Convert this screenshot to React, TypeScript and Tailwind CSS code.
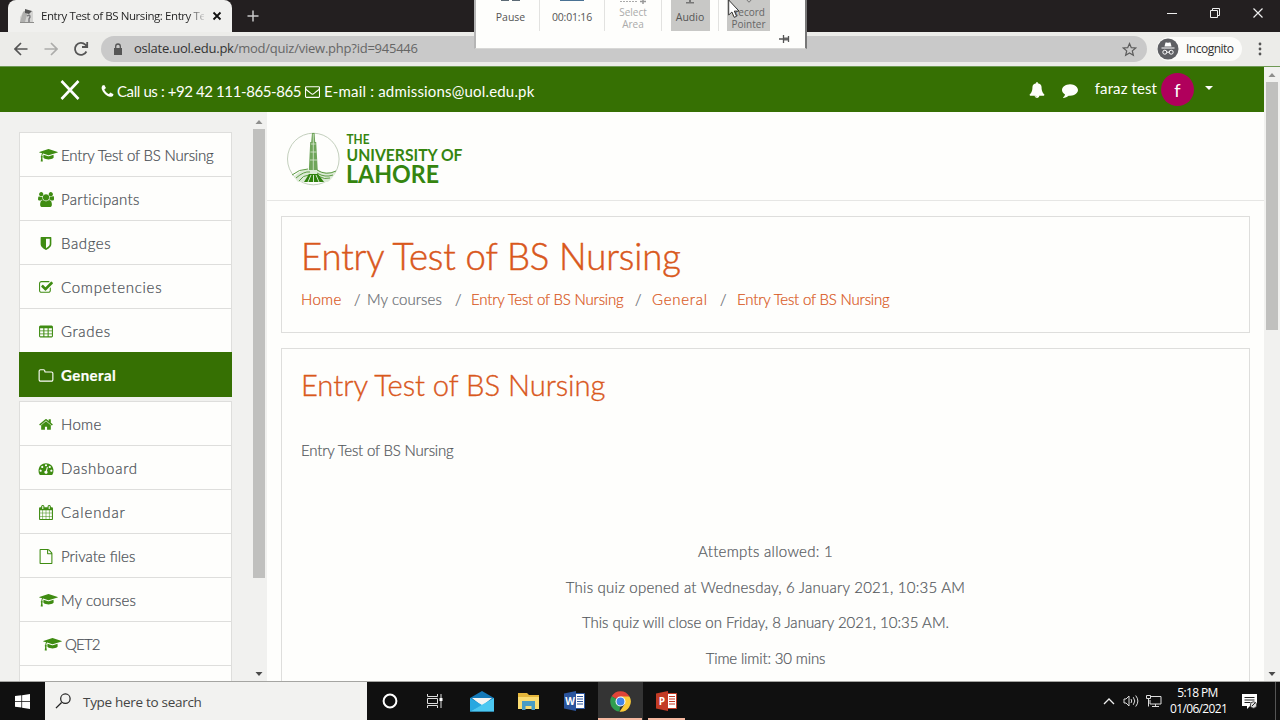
import React from 'react';

interface NavItem {
  label: string;
  icon: keyof typeof GLYPHS;
  tracking: string;
  nested?: boolean;
}

const GLYPHS = {
  cap: 'M1774 836l18 316q4 69-82 128t-235 93.5-323 34.5-323-34.5-235-93.5-82-128l18-316 574 181q22 7 48 7t48-7zm530-324q0 23-22 31l-1120 352q-4 1-10 1t-10-1l-652-206q-43 34-71 111.5t-34 178.5q63 36 63 109 0 69-58 107l58 433q2 14-8 25-9 11-24 11h-192q-15 0-24-11-10-11-8-25l58-433q-58-38-58-107 0-73 65-111 11-207 98-330l-333-104q-22-8-22-31t22-31l1120-352q4-1 10-1t10 1l1120 352q22 8 22 31z',
  users: 'M593 896q-162 5-265 128h-134q-82 0-138-40.5t-56-118.5q0-353 124-353 6 0 43.5 21t97.5 42.5 119 21.5q67 0 133-23-5 37-5 66 0 159 93 293zm1071 637q0 120-73 189.5t-194 69.5h-874q-121 0-194-69.5t-73-189.5q0-53 3.5-103.5t14-109 26.5-108.5 43-97.5 62-81 85.5-53.5 111.5-20q10 0 43 21.5t73 48 107 48 135 21.5 135-21.5 107-48 73-48 43-21.5q61 0 111.5 20t85.5 53.5 62 81 43 97.5 26.5 108.5 14 109 3.5 103.5zm-1024-1277q0 106-75 181t-181 75-181-75-75-181 75-181 181-75 181 75 75 181zm704 384q0 159-112.5 271.5t-271.5 112.5-271.5-112.5-112.5-271.5 112.5-271.5 271.5-112.5 271.5 112.5 112.5 271.5zm576 225q0 78-56 118.5t-138 40.5h-134q-103-123-265-128 93-134 93-293 0-29-5-66 66 23 133 23 59 0 119-21.5t97.5-42.5 43.5-21q124 0 124 353zm-128-609q0 106-75 181t-181 75-181-75-75-181 75-181 181-75 181 75 75 181z',
  shield: 'M1344 960v-640h-448v1137q119-63 213-137 235-184 235-360zm192-768v768q0 86-33.5 170.5t-83 150-118 127.5-126.5 103-121 77.5-89.5 49.5-42.5 20q-12 6-26 6t-26-6q-16-7-42.5-20t-89.5-49.5-121-77.5-126.5-103-118-127.5-83-150-33.5-170.5v-768q0-26 19-45t45-19h1152q26 0 45 19t19 45z',
  check: 'M1472 930v318q0 119-84.5 203.5t-203.5 84.5h-832q-119 0-203.5-84.5t-84.5-203.5v-832q0-119 84.5-203.5t203.5-84.5h832q63 0 117 25 15 7 18 23 3 17-9 29l-49 49q-10 10-23 10-3 0-9-2-23-6-45-6h-832q-66 0-113 47t-47 113v832q0 66 47 113t113 47h832q66 0 113-47t47-113v-254q0-13 9-22l64-64q10-10 23-10 6 0 12 3 20 8 20 29zm231-489l-814 814q-24 24-57 24t-57-24l-430-430q-24-24-24-57t24-57l110-110q24-24 57-24t57 24l263 263 647-647q24-24 57-24t57 24l110 110q24 24 24 57t-24 57z',
  table: 'M1728 352v1088q0 66-47 113t-113 47h-1344q-66 0-113-47t-47-113v-1088q0-66 47-113t113-47h1344q66 0 113 47t47 113zM192 512h384v256h-384zM704 512h384v256h-384zM1216 512h384v256h-384zM192 864h384v256h-384zM704 864h384v256h-384zM1216 864h384v256h-384zM192 1216h384v256h-384zM704 1216h384v256h-384zM1216 1216h384v256h-384z',
  folder: 'M1600 1312v-704q0-40-28-68t-68-28h-704q-40 0-68-28t-28-68v-64q0-40-28-68t-68-28h-320q-40 0-68 28t-28 68v960q0 40 28 68t68 28h1216q40 0 68-28t28-68zm128-704v704q0 92-66 158t-158 66h-1216q-92 0-158-66t-66-158v-960q0-92 66-158t158-66h320q92 0 158 66t66 158v32h672q92 0 158 66t66 158z',
  home: 'M1472 992v480q0 26-19 45t-45 19h-384v-384h-256v384h-384q-26 0-45-19t-19-45v-480q0-1 .5-3t.5-3l575-474 575 474q1 2 1 6zm223-69l-62 74q-8 9-21 11h-3q-13 0-21-7l-692-577-692 577q-12 8-24 7-13-2-21-11l-62-74q-8-10-7-23.5t11-21.5l719-599q32-26 76-26t76 26l244 204v-195q0-14 9-23t23-9h192q14 0 23 9t9 23v408l219 182q10 8 11 21.5t-7 23.5z',
  gauge: 'M384 1152q0-53-37.5-90.5t-90.5-37.5-90.5 37.5-37.5 90.5 37.5 90.5 90.5 37.5 90.5-37.5 37.5-90.5zm192-448q0-53-37.5-90.5t-90.5-37.5-90.5 37.5-37.5 90.5 37.5 90.5 90.5 37.5 90.5-37.5 37.5-90.5zm428 481l101-382q6-26-7.5-48.5t-38.5-29.5-48 6.5-30 39.5l-101 382q-60 5-107 43.5t-63 98.5q-20 77 20 146t117 89 146-20 89-117q16-60-6-117t-72-91zm660-33q0-53-37.5-90.5t-90.5-37.5-90.5 37.5-37.5 90.5 37.5 90.5 90.5 37.5 90.5-37.5 37.5-90.5zm-640-640q0-53-37.5-90.5t-90.5-37.5-90.5 37.5-37.5 90.5 37.5 90.5 90.5 37.5 90.5-37.5 37.5-90.5zm448 192q0-53-37.5-90.5t-90.5-37.5-90.5 37.5-37.5 90.5 37.5 90.5 90.5 37.5 90.5-37.5 37.5-90.5zm320 448q0 261-141 483-19 29-54 29h-1402q-35 0-54-29-141-221-141-483 0-182 71-348t191-286 286-191 348-71 348 71 286 191 191 286 71 348z',
  calendar: 'M192 1664h288v-288h-288v288zm352 0h320v-288h-320v288zm-352-352h288v-320h-288v320zm352 0h320v-320h-320v320zm-352-384h288v-288h-288v288zm736 736h320v-288h-320v288zm-384-736h320v-288h-320v288zm768 736h288v-288h-288v288zm-384-352h320v-320h-320v320zm-352-864v-288q0-13-9.5-22.5t-22.5-9.5h-64q-13 0-22.5 9.5t-9.5 22.5v288q0 13 9.5 22.5t22.5 9.5h64q13 0 22.5-9.5t9.5-22.5zm736 864h288v-320h-288v320zm-384-384h320v-288h-320v288zm384 0h288v-288h-288v288zm32-480v-288q0-13-9.5-22.5t-22.5-9.5h-64q-13 0-22.5 9.5t-9.5 22.5v288q0 13 9.5 22.5t22.5 9.5h64q13 0 22.5-9.5t9.5-22.5zm384-64v1280q0 52-38 90t-90 38h-1408q-52 0-90-38t-38-90v-1280q0-52 38-90t90-38h128v-96q0-66 47-113t113-47h64q66 0 113 47t47 113v96h384v-96q0-66 47-113t113-47h64q66 0 113 47t47 113v96h128q52 0 90 38t38 90z',
  file: 'M1596 380q28 28 48 76t20 88v1152q0 40-28 68t-68 28h-1344q-40 0-68-28t-28-68v-1600q0-40 28-68t68-28h896q40 0 88 20t76 48zm-444-244v376h376q-10-29-22-41l-313-313q-12-12-41-22zm384 1528v-1024h-416q-40 0-68-28t-28-68v-416h-768v1536h1280z',
  phone: 'M1600 1240q0 27-10 70.5t-21 68.5q-21 50-122 106-94 51-186 51-27 0-53-3.5t-57.5-12.5-47-14.5-55.5-20.5-49-18q-98-35-175-83-127-79-264-216t-216-264q-48-77-83-175-3-9-18-49t-20.5-55.5-14.5-47-12.5-57.5-3.5-53q0-92 51-186 56-101 106-122 25-11 68.5-21t70.5-10q14 0 21 3 18 6 53 76 11 19 30 54t35 63.5 31 53.5q3 4 17.5 25t21.5 35.5 7 28.5q0 20-28.5 50t-62 55-62 53-28.5 46q0 9 5 22.5t8.5 20.5 14 24 11.5 19q76 137 174 235t235 174q2 1 19 11.5t24 14 20.5 8.5 22.5 5q18 0 46-28.5t53-62 55-62 50-28.5q14 0 28.5 7t35.5 21.5 25 17.5q25 15 53.5 31t63.5 35 54 30q70 35 76 53 3 7 3 21z',
  envelope: 'M1664 1504v-768q-32 36-69 66-268 206-426 338-51 43-83 67t-86.5 48.5-102.5 24.5h-2q-48 0-102.5-24.5t-86.5-48.5-83-67q-158-132-426-338-37-30-69-66v768q0 13 9.5 22.5t22.5 9.5h1472q13 0 22.5-9.5t9.5-22.5zm0-1051v-24.5l-.5-13-3-12.5-5.5-9-9-7.5-14-2.5h-1472q-13 0-22.5 9.5t-9.5 22.5q0 168 147 284 193 152 401 317 6 5 35 29.5t46 37.5 44.5 31.5 50.5 27.5 43 9h2q20 0 43-9t50.5-27.5 44.5-31.5 46-37.5 35-29.5q208-165 401-317 54-43 100.5-115.5t46.5-131.5zm128-37v1088q0 66-47 113t-113 47h-1472q-66 0-113-47t-47-113v-1088q0-66 47-113t113-47h1472q66 0 113 47t47 113z',
  bell: 'M912 1696q0-16-16-16-59 0-101.5-42.5t-42.5-101.5q0-16-16-16t-16 16q0 73 51.5 124.5t124.5 51.5q16 0 16-16zm816-288q0 52-38 90t-90 38h-448q0 106-75 181t-181 75-181-75-75-181h-448q-52 0-90-38t-38-90q50-42 91-88t85-119.5 74.5-158.5 50-206 19.5-260q0-152 117-282.5t307-158.5q-8-19-8-39 0-40 28-68t68-28 68 28 28 68q0 20-8 39 190 28 307 158.5t117 282.5q0 139 19.5 260t50 206 74.5 158.5 85 119.5 91 88z',
  comment: 'M1792 896q0 174-120 321.5t-326 233-450 85.5q-70 0-145-8-198 175-460 242-49 14-114 22-17 2-30.5-9t-17.5-29v-1q-3-4-.5-12t2-10 4.5-9.5l6-9 7-8.5 8-9q7-8 31-34.5t34.5-38 31-39.5 32.5-51 27-59 26-76q-157-89-247.5-220t-90.5-281q0-130 71-248.5t191-204.5 286-136.5 348-50.5q244 0 450 85.5t326 233 120 321.5z',
};

const courseItems: NavItem[] = [
  { label: 'Entry Test of BS Nursing', icon: 'cap', tracking: 'tracking-[-0.19px]' },
  { label: 'Participants', icon: 'users', tracking: 'tracking-[0.3px]' },
  { label: 'Badges', icon: 'shield', tracking: 'tracking-[0.6px]' },
  { label: 'Competencies', icon: 'check', tracking: 'tracking-[0.75px]' },
  { label: 'Grades', icon: 'table', tracking: 'tracking-[0.65px]' },
];

const siteItems: NavItem[] = [
  { label: 'Home', icon: 'home', tracking: 'tracking-[0.3px]' },
  { label: 'Dashboard', icon: 'gauge', tracking: 'tracking-[0.75px]' },
  { label: 'Calendar', icon: 'calendar', tracking: 'tracking-[0.9px]' },
  { label: 'Private files', icon: 'file', tracking: 'tracking-[0px]' },
  { label: 'My courses', icon: 'cap', tracking: 'tracking-[0.1px]' },
  { label: 'QET2', icon: 'cap', tracking: 'tracking-[-0.8px]', nested: true },
];

const quizInfo = [
  { text: 'Attempts allowed: 1', tracking: 'tracking-[0.3px]' },
  { text: 'This quiz opened at Wednesday, 6 January 2021, 10:35 AM', tracking: 'tracking-[0.24px]' },
  { text: 'This quiz will close on Friday, 8 January 2021, 10:35 AM.', tracking: 'tracking-[0px]' },
  { text: 'Time limit: 30 mins', tracking: 'tracking-[-0.15px]' },
];

export default function App() {
  return (
    <div className="relative flex h-[720px] w-[1280px] flex-col overflow-hidden bg-[#fefefc] font-['Lato',sans-serif]">
      <BrowserChrome />
      <div className="flex min-h-0 flex-1 border-t border-[#6f9a55]">
        <div className="flex min-w-0 flex-1 flex-col">
          <SiteHeader />
          <div className="flex min-h-0 flex-1 font-light [-webkit-text-stroke:0.22px]">
            <Sidebar />
            <QuizPage />
          </div>
        </div>
        <Scrollbar className="w-4" thumb="h-[248px] w-3" />
      </div>
      <Taskbar />
      <RecorderPanel />
    </div>
  );
}

function Glyph({ name, className }: { name: keyof typeof GLYPHS; className?: string }) {
  const width = name === 'cap' ? 2304 : name === 'users' ? 1920 : 1792;
  return (
    <svg viewBox={`0 0 ${width} 1792`} className={className} fill="currentColor" fillRule="evenodd">
      <path d={GLYPHS[name]} />
    </svg>
  );
}

function Scrollbar({ className, thumb }: { className: string; thumb: string }) {
  return (
    <div className={`flex shrink-0 flex-col items-center bg-[#f1f1ef] ${className}`}>
      <svg viewBox="0 0 16 15" className="h-[15px] w-4 shrink-0"><path d="M4.5 10L8 6l3.5 4z" fill="#8f8f8d" /></svg>
      <div className={`bg-[#c0c0be] ${thumb}`} />
      <svg viewBox="0 0 16 15" className="mt-auto h-[15px] w-4 shrink-0"><path d="M4.5 6h7L8 10z" fill="#4a4a4a" /></svg>
    </div>
  );
}

function BrowserChrome() {
  return (
    <div className="shrink-0 font-['Open_Sans',sans-serif]">
      {/* Tab strip */}
      <div className="flex h-8 bg-[#231f20] pl-2">
        <div className="flex w-56 items-center rounded-t-lg bg-[#f0f0ee] pl-[11px]">
          <svg viewBox="0 0 16 16" className="mr-1.5 h-4 w-4 shrink-0">
            <path d="M5 3h9v11H1V9z" fill="#d4d4d2" />
            <path d="M1 14l3-10 3-2 1 5-2 7z" fill="#b0b0ae" />
            <path d="M6 1l7 2-3 3-4-1z" fill="#555" />
            <path d="M8 8q3-2 3 1l-1 2v3" fill="none" stroke="#77777a" strokeWidth="1.4" />
            <path d="M1 14.5h14" stroke="#8d8d8b" />
          </svg>
          <span className="w-[163px] bg-gradient-to-r from-[#222] from-90% to-[#ccc] bg-clip-text text-[11.5px] tracking-[-0.42px] whitespace-nowrap text-transparent">
            Entry Test of BS Nursing: Entry Te
          </span>
          <svg viewBox="0 0 10 10" className="ml-2 h-2.5 w-2.5 shrink-0"><path d="M1.5 1.5l7 7m0-7l-7 7" stroke="#111" strokeWidth="1.8" /></svg>
        </div>
        <svg viewBox="0 0 12 12" className="mt-2.5 ml-[15px] h-3 w-3"><path d="M6 .5v11M.5 6h11" stroke="#c9c9c9" strokeWidth="1.5" /></svg>
        <div className="mt-[7px] mr-[16px] ml-auto flex h-3 gap-[31px]">
          <svg viewBox="0 0 12 12" className="h-3 w-3"><path d="M1 6.5h10" stroke="#eee" /></svg>
          <svg viewBox="0 0 12 12" className="h-3 w-3"><path d="M1.5 3.5h7v7h-7zM3.5 3.5v-2h7v7h-2" fill="none" stroke="#eee" /></svg>
          <svg viewBox="0 0 12 12" className="h-3 w-3"><path d="M1.5 1.5l9 9m0-9l-9 9" stroke="#eee" strokeWidth="1.2" /></svg>
        </div>
      </div>
      {/* Address bar */}
      <div className="flex h-[34px] items-center bg-[#ecece9] pl-3.5">
        <svg viewBox="0 0 14 14" className="h-3.5 w-3.5"><path d="M13.5 7H1M7 1L1 7l6 6" fill="none" stroke="#555" strokeWidth="1.7" /></svg>
        <svg viewBox="0 0 14 14" className="ml-4 h-3.5 w-3.5"><path d="M.5 7H13M7 1l6 6-6 6" fill="none" stroke="#acacaa" strokeWidth="1.7" /></svg>
        <svg viewBox="0 0 16 16" className="ml-[15px] h-4 w-4"><path d="M13.4 10.5A6 6 0 1 1 12.3 3.7L14 5.4M14.2 1v5H9" fill="none" stroke="#555" strokeWidth="1.8" /></svg>
        <div className="ml-3 flex h-[26px] w-[1046px] items-center rounded-full bg-[#c9c9c9] pr-2.5 pl-3">
          <svg viewBox="0 0 10 13" className="h-[13px] w-2.5"><path d="M1 5h8v7H1z" fill="#555" /><path d="M2.7 5V3.3a2.3 2.3 0 0 1 4.6 0V5" fill="none" stroke="#555" strokeWidth="1.3" /></svg>
          <span className="ml-[11px] text-[13px] tracking-[-0.24px] text-[#666]"><span className="text-[#333]">oslate.uol.edu.pk</span>/mod/quiz/view.php?id=945446</span>
          <svg viewBox="0 0 16 16" className="ml-auto h-[15px] w-[15px]"><path d="M8 1.6l1.9 4.4 4.7.4-3.6 3.1 1.1 4.7L8 11.7l-4.1 2.5L5 9.5 1.4 6.4 6.1 6z" fill="none" stroke="#5c5c5c" strokeWidth="1.3" /></svg>
        </div>
        <div className="ml-2.5 flex h-6 w-[85px] items-center rounded-full bg-[#fcfcfa]">
          <svg viewBox="0 0 22 22" className="h-[22px] w-[22px]">
            <circle cx="11" cy="11" r="10.5" fill="#5f6064" />
            <path d="M7.5 8.5l1-4h1.7l.8.4.8-.4h1.7l1 4zM4.5 9.5h13v1h-13z" fill="#fff" />
            <path d="M9.7 14.2h2.6" stroke="#fff" />
            <circle cx="7.8" cy="14.2" r="2" fill="none" stroke="#fff" />
            <circle cx="14.2" cy="14.2" r="2" fill="none" stroke="#fff" />
          </svg>
          <span className="ml-[7px] text-xs tracking-[-0.5px] text-[#333]">Incognito</span>
        </div>
        <svg viewBox="0 0 4 14" className="ml-[16px] h-3.5 w-1" fill="#555"><circle cx="2" cy="2" r="1.4" /><circle cx="2" cy="7" r="1.4" /><circle cx="2" cy="12" r="1.4" /></svg>
      </div>
    </div>
  );
}

function SiteHeader() {
  return (
    <div className="flex h-[45px] shrink-0 items-center bg-[#367003] pl-[60px] text-[#fefefc]">
      <svg viewBox="0 0 20 20" className="h-5 w-5"><path d="M1.5 1l17 18m0-18l-17 18" stroke="#fff" strokeWidth="2.6" /></svg>
      <Glyph name="phone" className="mt-1 ml-5 h-[15px] w-[15px]" />
      <span className="mt-1 ml-0.5 w-[184px] text-[15px] tracking-[-0.4px] whitespace-nowrap">Call us : +92 42 111-865-865</span>
      <Glyph name="envelope" className="mt-1 ml-1 h-[15px] w-[15px]" />
      <span className="mt-1 ml-1 text-[15px] tracking-[0.18px]">E-mail : admissions@uol.edu.pk</span>
      <Glyph name="bell" className="mr-[17px] ml-auto h-4 w-4" />
      <Glyph name="comment" className="mr-[17px] h-4 w-4" />
      <span className="mb-[3px] text-[15px] tracking-[0.1px]">faraz test</span>
      <span className="mr-[11px] ml-1 flex h-[33px] w-[33px] items-center justify-center rounded-full bg-[#b0005c] text-lg">f</span>
      <svg viewBox="0 0 8 4" className="mr-[51px] mb-1 h-1 w-2"><path d="M0 0h8L4 4z" fill="#fff" /></svg>
    </div>
  );
}

function NavRow({ item }: { item: NavItem }) {
  return (
    <div className={`flex h-11 shrink-0 items-center border-b border-[#dededc] pt-0.5 ${item.nested ? 'pl-[22px]' : 'pl-[18px]'}`}>
      <span className="flex w-[23px] items-center text-[#3f8c12]">
        <Glyph name={item.icon} className={item.icon === 'cap' ? 'ml-px h-[14.5px] w-[19px]' : item.icon === 'users' ? 'h-[15px] w-4' : 'h-[15px] w-4'} />
      </span>
      <span className={`text-[15px] text-[#4a4f55] ${item.tracking}`}>{item.label}</span>
    </div>
  );
}

function Sidebar() {
  return (
    <div className="flex w-[267px] shrink-0 bg-[#f1f1ef]">
      <div className="mt-5 ml-[19px] flex w-[213px] flex-col overflow-hidden">
        <div className="shrink-0 border border-b-0 border-[#dededc] bg-[#fefefc]">
          {courseItems.map(item => <NavRow key={item.label} item={item} />)}
        </div>
        <div className="-mt-px flex h-[45px] shrink-0 items-center bg-[#367003] pt-0.5 pl-[19px] text-[#fefefc]">
          <Glyph name="folder" className="mr-[7px] h-4 w-4" />
          <span className="text-[15px] font-bold tracking-[0.45px]">General</span>
        </div>
        <div className="mt-1 min-h-0 flex-1 overflow-hidden border-x border-t border-[#dededc] bg-[#fefefc]">
          {siteItems.map(item => <NavRow key={item.label} item={item} />)}
        </div>
      </div>
      <Scrollbar className="mr-0.5 ml-auto w-3 pt-0.5" thumb="h-[449px] w-3" />
    </div>
  );
}

function Logo() {
  return (
    <svg viewBox="0 0 178 56" className="h-14 w-[178px]">
      <circle cx="26.3" cy="27" r="25.8" fill="none" stroke="#c3cfbd" />
      <path d="M25 1h2.6l.6 9h1l1.6 29h-9l1.4-29h1z" fill="#6fa55a" />
      <path d="M26.3 2v36M24 12h4.6M23.4 20h6M23 28h7" stroke="#d9e8d2" strokeWidth=".8" />
      <path d="M7 45q7-9 15-7h9q8 4 18 1-2 6-8 11H11z" fill="#dcead6" />
      <path d="M5 43q7-6 16-6M9 46q8-7 14-6M30 38q9 6 19 1M30 41q8 5 16 2M31 44q7 4 12 2M12 49q4-6 10-6" fill="none" stroke="#5c9b42" strokeWidth="1" />
      <path d="M17 50l5-8h9l6 8z" fill="#2f820d" />
      <path d="M21 50l3-7M26.5 50v-7M32 50l-3-7" stroke="#e6f0e2" strokeWidth=".9" />
      <g fill="#35850f" fontFamily="Lato, sans-serif" fontWeight="700">
        <text x="59.5" y="11.7" fontSize="13.8" textLength="23" lengthAdjust="spacingAndGlyphs">THE</text>
        <text x="59.5" y="28.5" fontSize="17.5" textLength="116" lengthAdjust="spacingAndGlyphs">UNIVERSITY OF</text>
        <text x="59" y="51.3" fontSize="25.5" textLength="93" lengthAdjust="spacingAndGlyphs">LAHORE</text>
      </g>
    </svg>
  );
}

function QuizPage() {
  return (
    <div className="min-w-0 flex-1 overflow-hidden">
      <div className="flex h-[89px] border-b border-[#e6e6e4] pt-5 pl-5">
        <Logo />
      </div>
      {/* Course heading */}
      <div className="mt-[15px] mr-3.5 ml-3.5 h-[117px] border border-[#dededc] pl-[19px]">
        <h1 className="mt-4 text-[36.5px] leading-[46px] tracking-[-0.1px] text-[#d9581c] [-webkit-text-stroke:0.5px]">Entry Test of BS Nursing</h1>
        <div className="mt-2 flex text-[15px] leading-6 whitespace-nowrap text-[#6b6f74]">
          <span className="w-[53px] tracking-[0.3px] text-[#d9581c]">Home</span>
          <span className="w-[13px]">/</span>
          <span className="w-[88px] tracking-[0.1px]">My courses</span>
          <span className="w-4">/</span>
          <span className="w-[164px] tracking-[-0.19px] text-[#d9581c]">Entry Test of BS Nursing</span>
          <span className="w-[17px]">/</span>
          <span className="w-[68px] tracking-[0.75px] text-[#d9581c]">General</span>
          <span className="w-[17px]">/</span>
          <span className="tracking-[-0.19px] text-[#d9581c]">Entry Test of BS Nursing</span>
        </div>
      </div>
      {/* Quiz summary */}
      <div className="mx-3.5 mt-[15px] h-[400px] border border-[#dededc] px-[19px] text-[15px] text-[#55595d]">
        <h2 className="mt-4 text-[29.2px] leading-10 tracking-[-0.05px] text-[#d9581c] [-webkit-text-stroke:0.35px]">Entry Test of BS Nursing</h2>
        <p className="mt-[33px] leading-6 tracking-[-0.19px]">Entry Test of BS Nursing</p>
        <div className="mt-[77px] flex flex-col gap-[11.7px] text-center leading-6">
          {quizInfo.map(line => <p key={line.text} className={line.tracking}>{line.text}</p>)}
        </div>
      </div>
    </div>
  );
}

// Screen recorder strip docked to the top edge
function RecorderPanel() {
  return (
    <div className="absolute top-0 left-[474px] h-[49px] w-[333px] border-x-2 border-b border-[#b5b5b5] border-r-[#777] border-b-[#d8d8d6] bg-[#fefefc] font-['Open_Sans',sans-serif] text-[10px] text-[#555]">
      <div className="flex h-[31px] pl-1.5">
        <div className="flex w-[58px] flex-col items-center border-r border-[#e2e2e0]">
          <svg viewBox="0 0 20 10" className="h-2.5 w-5"><path d="M0 0h8v1H0zM11 0h8v1h-8z" fill="#5d6a75" /></svg>
          <span className="text-[10.5px] leading-[14px]">Pause</span>
        </div>
        <div className="flex w-[65px] flex-col items-center border-r border-[#e2e2e0]">
          <div className="mb-[9px] h-px w-6 bg-[#4a7294]" />
          <span className="text-[10.5px] leading-[14px] tracking-[-0.2px]">00:01:16</span>
        </div>
        <div className="flex w-[57px] flex-col items-center border-r border-[#e2e2e0] leading-3 text-[#aaa]">
          <svg viewBox="0 0 30 6" className="h-1.5 w-[30px]"><path d="M2 1.5h17" stroke="#aaa" strokeDasharray="2 1" /><path d="M25 0v4m-3-2.5h6" stroke="#999" strokeWidth="1.5" /></svg>
          <span>Select</span>
          <span>Area</span>
        </div>
        <div className="flex w-[57px] justify-center border-r border-[#e2e2e0]">
          <div className="flex w-[39px] flex-col items-center bg-[#c8c8c6]">
            <svg viewBox="0 0 10 10" className="h-2.5 w-2.5"><path d="M4 0h2v2h3v1.5H1V2h3z" fill="#777" /></svg>
            <span className="text-[10.5px] leading-[14px]">Audio</span>
          </div>
        </div>
        <div className="ml-2 flex w-[43px] flex-col items-center bg-[#c8c8c6] leading-3 text-[#666]">
          <svg viewBox="0 0 10 6" className="h-1.5 w-2.5 shrink-0"><path d="M3 0q2 4 4 0" fill="none" stroke="#777" /></svg>
          <span>Record</span>
          <span>Pointer</span>
        </div>
      </div>
      <svg viewBox="0 0 11 8" className="mt-1 ml-[303px] h-2 w-[11px]"><path d="M0 4h4M4.5 0v8M9.5 1v6" stroke="#555" strokeWidth="1.3" /><path d="M5 2.5h4v3H5z" fill="#666" /></svg>
      <svg viewBox="0 0 12 19" className="absolute top-0 left-[252px] h-[19px] w-3">
        <path d="M.7 0v15l3.2-3 2.3 5.3 2.4-1-2.3-5.2H11L.7 0z" fill="#fff" stroke="#222" strokeWidth=".9" />
      </svg>
    </div>
  );
}

function Taskbar() {
  return (
    <div className="flex h-[39px] shrink-0 border-t border-[#a5a5a2] bg-[#101010] font-['Open_Sans',sans-serif] text-white">
      <div className="flex w-[45px] items-center justify-center">
        <svg viewBox="0 0 16 16" className="h-[15px] w-[15px]" fill="#fff"><path d="M0 2.2l6.8-.9v6.2H0zM7.6 1.2L16 0v7.5H7.6zM0 8.3h6.8v6.2L0 13.6zM7.6 8.3H16V16l-8.4-1.3z" /></svg>
      </div>
      <div className="flex w-[322px] items-center bg-[#f2f2f0] pl-2.5 text-[#444]">
        <svg viewBox="0 0 18 18" className="h-[17px] w-[17px]"><path d="M1 16l6-6" stroke="#222" strokeWidth="1.4" /><circle cx="11" cy="6" r="5" fill="none" stroke="#222" strokeWidth="1.3" /></svg>
        <span className="mt-0.5 ml-[11px] text-[13.5px] tracking-[-0.3px]">Type here to search</span>
      </div>
      <div className="flex w-[45px] items-center justify-center">
        <svg viewBox="0 0 16 16" className="h-4 w-4"><circle cx="8" cy="8" r="6.4" fill="none" stroke="#fff" strokeWidth="2" /></svg>
      </div>
      <div className="flex w-[45px] items-center justify-center">
        <svg viewBox="0 0 16 14" className="h-3.5 w-4"><path d="M.5 0v2.5h10V0M.5 14v-2.5h10V14M.5 4.5h10v5H.5zM14 0v14" fill="none" stroke="#ddd" /><path d="M12.5 4h3v3h-3z" fill="#fff" /></svg>
      </div>
      <div className="flex w-[50px] items-center justify-center">
        <svg viewBox="0 0 24 21" className="h-[21px] w-6"><path d="M0 7l12-7 12 7v13.5H0z" fill="#1479b8" /><path d="M2 7h20l-10 8z" fill="#f5f5f3" /><path d="M0 7l12 7-12 6.5z" fill="#28a8e0" /><path d="M24 7L0 20.5h24z" fill="#4cc8f1" /></svg>
      </div>
      <div className="flex w-[43px] items-center justify-center">
        <svg viewBox="0 0 21 18" className="h-[18px] w-[21px]"><path d="M0 1h9l2 2h10v14H0z" fill="#e5b63b" /><path d="M0 5h21v12H0z" fill="#fbdc72" /><path d="M4 18V9h13v9h-3.5v-4h-6v4z" fill="#4a9cc4" /></svg>
      </div>
      <div className="flex w-[48px] items-center justify-center">
        <OfficeIcon letter="W" color="#2b559e" />
      </div>
      <div className="flex w-[44px] items-center justify-center border-b-2 border-[#f5b8a0] bg-[#343434]">
        <svg viewBox="0 0 22 22" className="mt-0.5 h-[21px] w-[21px]">
          <path d="M11 11L1.7 5.6A10.7 10.7 0 0 1 20.3 5.6z" fill="#e04438" />
          <path d="M11 11l-1 10.6A10.7 10.7 0 0 1 1.7 5.6z" fill="#2f9e4f" />
          <path d="M11 5.8h9.4a10.7 10.7 0 0 1-10.4 15.9L15.5 13.5z" fill="#fbcb38" />
          <circle cx="11" cy="11" r="5.2" fill="#fff" />
          <circle cx="11" cy="11" r="4.1" fill="#4285e8" />
        </svg>
      </div>
      <div className="mr-[5px] w-px bg-[#343434]" />
      <div className="flex w-[37px] items-center justify-center border-b-2 border-[#f5b8a0] pt-0.5">
        <OfficeIcon letter="P" color="#c33b25" />
      </div>
      <div className="ml-auto flex items-center">
        <svg viewBox="0 0 12 7" className="mr-2 h-[7px] w-3"><path d="M1 6l5-5 5 5" fill="none" stroke="#eee" strokeWidth="1.3" /></svg>
        <svg viewBox="0 0 16 14" className="mr-[7px] h-3.5 w-4"><path d="M1 5h2l3-3v10L3 9H1zM8 5q1.5 2 0 4M10.3 3.2q3 3.8 0 7.6M12.7 1.5q4.3 5.5 0 11" fill="none" stroke="#ddd" /></svg>
        <svg viewBox="0 0 16 14" className="mr-2 h-3.5 w-4"><path d="M5 2.5h10v7.5H4V6M9.5 10v2.5M6 12.5h7M.5 1.5h4v3h-4zM2.5 5v7.5" fill="none" stroke="#ddd" /></svg>
        <div className="w-[55px] text-center text-xs leading-4 tracking-[-0.65px] whitespace-nowrap">
          <div>5:18 PM</div>
          <div>01/06/2021</div>
        </div>
        <svg viewBox="0 0 17 17" className="ml-4 h-[17px] w-[17px]"><path d="M1 1h15v12H9l-3 3v-3H1z" fill="#fff" /><path d="M3.5 4.5h10M3.5 7h10M3.5 9.5h6" stroke="#222" /><circle cx="12.5" cy="12" r="3.2" fill="#ddd" stroke="#222" strokeWidth=".8" /><path d="M11 13l3-3" stroke="#222" /></svg>
        <div className="mr-1 ml-[17px] h-[38px] w-px bg-[#555]" />
      </div>
    </div>
  );
}

function OfficeIcon({ letter, color }: { letter: string; color: string }) {
  return (
    <svg viewBox="0 0 21 20" className="h-5 w-[21px]">
      <path d="M11 2.5h9.5v15H11z" fill="#fff" stroke={color} />
      <path d="M13 5.5h6M13 8h6M13 10.5h6M13 13h6" stroke={color} />
      <path d="M0 2.4L12 0v20L0 17.6z" fill={color} />
      <text x="6" y="14" textAnchor="middle" fontFamily="Open Sans, sans-serif" fontWeight="700" fontSize="10" fill="#fff">{letter}</text>
    </svg>
  );
}
